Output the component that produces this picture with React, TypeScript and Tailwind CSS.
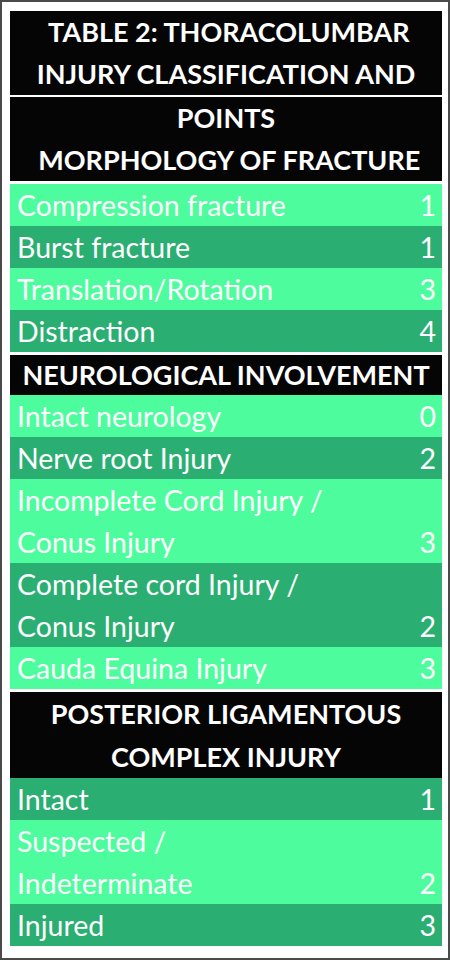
const FONT = "font-['Lato','Open_Sans',sans-serif]";

type Row = { label: string[]; points: number; dark: boolean };

const morphology: Row[] = [
  { label: ["Compression fracture"], points: 1, dark: false },
  { label: ["Burst fracture"], points: 1, dark: true },
  { label: ["Translation/Rotation"], points: 3, dark: false },
  { label: ["Distraction"], points: 4, dark: true },
];

const neuro: Row[] = [
  { label: ["Intact neurology"], points: 0, dark: false },
  { label: ["Nerve root Injury"], points: 2, dark: true },
  { label: ["Incomplete Cord Injury /", "Conus Injury"], points: 3, dark: false },
  { label: ["Complete cord Injury /", "Conus Injury"], points: 2, dark: true },
  { label: ["Cauda Equina Injury"], points: 3, dark: false },
];

const plc: Row[] = [
  { label: ["Intact"], points: 1, dark: true },
  { label: ["Suspected /", "Indeterminate"], points: 2, dark: false },
  { label: ["Injured"], points: 3, dark: true },
];

function Header({ lines, className = "" }: { lines: string[]; className?: string }) {
  return (
    <div className={`bg-[#050505] text-white font-bold text-[27px] text-center ${className}`}>
      {lines.map((l) => (
        <div key={l}>{l}</div>
      ))}
    </div>
  );
}

function Rows({ rows }: { rows: Row[] }) {
  return (
    <div className="flex flex-col">
      {rows.map((r, i) => (
        <div
          key={i}
          className={`flex items-end justify-between pl-[7px] pr-[6px] text-white text-[28.5px] leading-[42px] ${
            r.dark ? "bg-[#2aae72]" : "bg-[#4dfd9d]"
          }`}
        >
          <div>
            {r.label.map((l) => (
              <div key={l}>{l}</div>
            ))}
          </div>
          <div>{r.points}</div>
        </div>
      ))}
    </div>
  );
}

export default function App() {
  return (
    <div className={`w-[450px] h-[960px] bg-white border-2 border-[#4a4a4a] pl-2 pr-[6px] pt-[9px] ${FONT}`}>
      <div className="flex flex-col">
        <Header lines={["\u00a0TABLE 2: THORACOLUMBAR", "INJURY CLASSIFICATION AND"]} className="leading-[42px]" />
        <Header lines={["POINTS", "\u00a0MORPHOLOGY OF FRACTURE"]} className="leading-[42px] mt-[2px]" />
        <div className="mt-[3px]">
          <Rows rows={morphology} />
        </div>
        <Header lines={["NEUROLOGICAL INVOLVEMENT"]} className="leading-[40px] mt-[3px]" />
        <Rows rows={neuro} />
        <Header lines={["POSTERIOR LIGAMENTOUS", "COMPLEX INJURY"]} className="leading-[43px] mt-[3px]" />
        <Rows rows={plc} />
      </div>
    </div>
  );
}
